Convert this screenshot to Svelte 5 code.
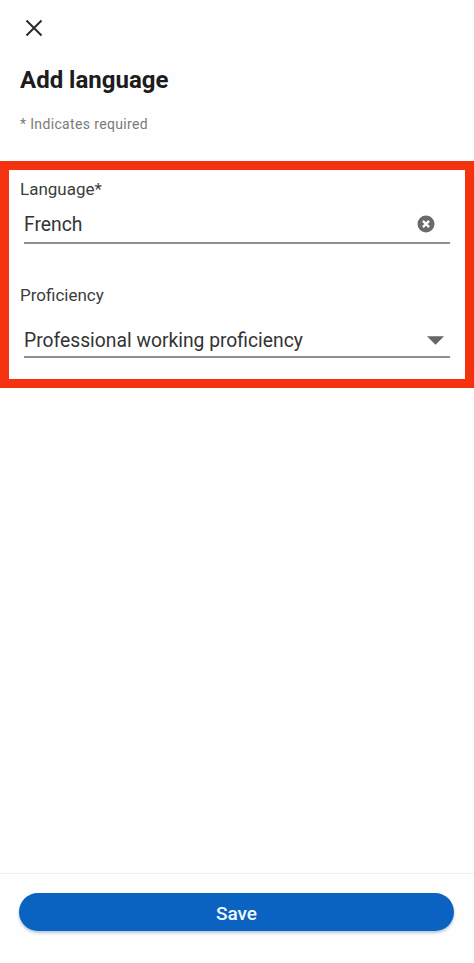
<script lang="ts">
	let language = $state('French')
	let proficiency = $state('Professional working proficiency')
</script>

<div class="page">
	<header class="top">
		<button class="close" aria-label="Close">
			<svg width="18" height="18" viewBox="0 0 18 18" fill="none" stroke="#2b2b2b" stroke-width="2">
				<path d="M1.5 1.5 16.5 16.5M16.5 1.5 1.5 16.5" />
			</svg>
		</button>
		<h1>Add language</h1>
		<p class="hint">* Indicates required</p>
	</header>

	<section class="form">
		<div class="field first">
			<span class="label">Language*</span>
			<div class="control">
				<span class="value">{language}</span>
				<svg class="clear" width="18" height="18" viewBox="0 0 18 18">
					<circle cx="9" cy="9" r="8.5" fill="#6a6a6a" />
					<path d="M5.9 5.9 12.1 12.1M12.1 5.9 5.9 12.1" stroke="#fff" stroke-width="2.4" />
				</svg>
			</div>
		</div>
		<div class="field second">
			<span class="label">Proficiency</span>
			<div class="control">
				<span class="value">{proficiency}</span>
				<svg class="caret" width="17" height="9" viewBox="0 0 16 8">
					<path d="M0 0H16L8 8Z" fill="#666" />
				</svg>
			</div>
		</div>
	</section>

	<footer class="bottom">
		<button class="save">Save</button>
	</footer>
</div>

<style>
	:global(body) {
		background: #fff;
	}

	.page {
		height: 963px;
		display: flex;
		flex-direction: column;
		font-family: Roboto, 'Liberation Sans', sans-serif;
		color: #2b2b2b;
		background: #fefefe;
	}

	.top {
		padding: 19px 20px 0;
	}

	.close {
		display: block;
		margin: 0 0 0 5px;
		padding: 0;
		width: 18px;
		height: 18px;
		border: none;
		background: none;
	}

	h1 {
		margin: 28px 0 0;
		font-size: 24px;
		line-height: 30px;
		font-weight: 700;
		color: #1c1c1c;
	}

	.hint {
		margin: 20px 0 0;
		font-size: 14px;
		line-height: 18px;
		letter-spacing: 0.35px;
		color: #7b7b7b;
	}

	.form {
		margin-top: 28px;
		height: 227px;
		box-sizing: border-box;
		border: 9px solid #f5320f;
		background: #fff;
		padding: 9px 15px 0 11px;
		flex-shrink: 0;
	}

	.field.second {
		margin-top: 41px;
	}

	.label {
		display: block;
		font-size: 17px;
		line-height: 20px;
		color: #3d3d3d;
	}

	.control {
		margin: 5px 0 0 4px;
		height: 34px;
		padding-top: 4px;
		display: flex;
		align-items: center;
		justify-content: space-between;
		border-bottom: 2px solid #8e8e8e;
	}

	.second .control {
		height: 31px;
		padding-top: 15px;
	}

	.value {
		font-size: 19.3px;
		line-height: 26px;
		color: #333;
	}

	.clear {
		margin: -2px 15px 0 0;
	}

	.caret {
		margin-right: 6px;
	}

	.bottom {
		margin-top: auto;
		height: 90px;
		box-sizing: border-box;
		border-top: 1px solid #f0f0f0;
		padding: 19px 20px 0 19px;
	}

	.save {
		display: block;
		width: 100%;
		height: 38px;
		padding: 2px 0 0;
		border: none;
		border-radius: 19px;
		background: #0a63c0;
		color: #f2f8ff;
		font-family: inherit;
		font-size: 19px;
		font-weight: 500;
		box-shadow: 0 2px 3px rgba(10, 70, 140, 0.3);
	}
</style>
